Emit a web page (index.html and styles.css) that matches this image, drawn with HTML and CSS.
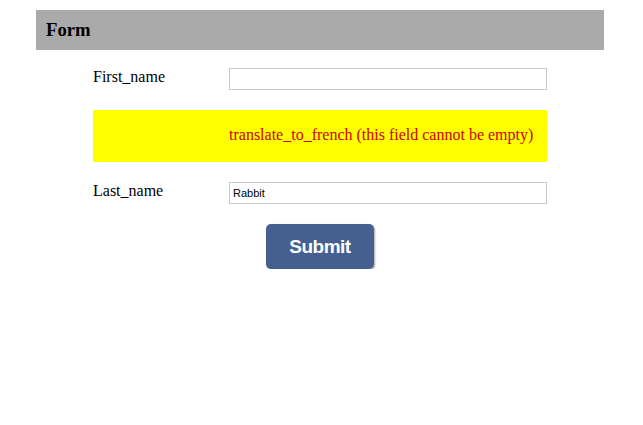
FILE: index.html
```html
<!DOCTYPE html>
<html>
<head>
<meta charset="utf-8">
<title>Form</title>
<link rel="stylesheet" href="styles.css">
</head>
<body>
<div class="page">
  <h3 class="title">Form</h3>
  <form class="form">
    <div class="row">
      <label class="label" for="first">First_name</label>
      <input class="field" id="first" type="text" value="">
    </div>
    <div class="error">translate_to_french (this field cannot be empty)</div>
    <div class="row">
      <label class="label" for="last">Last_name</label>
      <input class="field" id="last" type="text" value="Rabbit">
    </div>
    <div class="actions">
      <button class="submit" type="button">Submit</button>
    </div>
  </form>
</div>
</body>
</html>
```
FILE: styles.css
```css
html, body {
  margin: 0;
  padding: 0;
  background: #fff;
}
body {
  font-family: "Liberation Serif", "Times New Roman", serif;
  font-size: 16px;
  color: #000;
}
.page {
  padding: 10px 0 0 36px;
  width: 568px;
}
.title {
  margin: 0;
  height: 40px;
  line-height: 40px;
  padding-left: 10px;
  background: #aaaaaa;
  font-size: 18.72px;
  font-weight: bold;
}
.form {
  margin: 17px 0 0 57px;
  width: 454px;
  display: flex;
  flex-direction: column;
}
.row {
  display: flex;
  align-items: flex-start;
  height: 23px;
}
.label {
  width: 136px;
  padding-top: 1px;
  line-height: 18px;
  flex: none;
}
.field {
  margin: 1px 0 0 0;
  box-sizing: border-box;
  width: 318px;
  height: 22px;
  border: 1px solid #c8c8c8;
  padding: 0 3px;
  font-family: "Liberation Sans", Arial, sans-serif;
  font-size: 11px;
  color: #000;
  outline: none;
  background: #fff;
}
.error {
  margin: 20px 0 19px 0;
  height: 52px;
  box-sizing: border-box;
  padding: 16px 0 0 136px;
  line-height: 18px;
  background: #ffff00;
  color: #cc0000;
}
.actions {
  display: flex;
  justify-content: center;
  margin-top: 20px;
}
.submit {
  width: 108px;
  height: 45px;
  border: none;
  border-radius: 5px;
  background: #445f90;
  color: #fff;
  font-family: "Liberation Sans", Arial, sans-serif;
  font-weight: bold;
  font-size: 19px;
  letter-spacing: -0.5px;
  box-shadow: 1px 1px 2px rgba(0, 0, 0, 0.35);
  padding: 0;
}
```
